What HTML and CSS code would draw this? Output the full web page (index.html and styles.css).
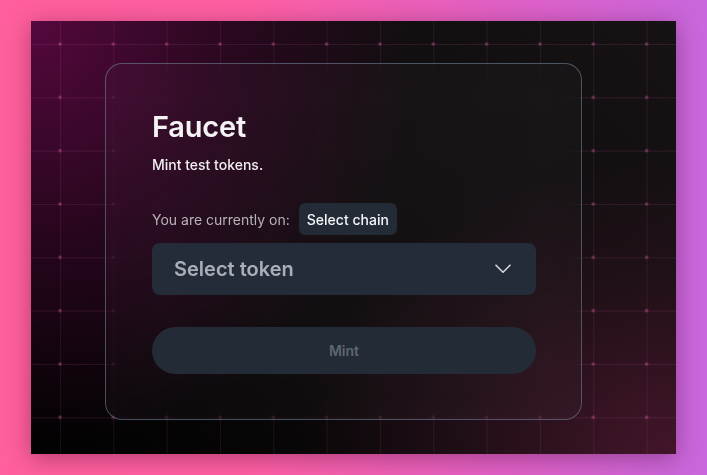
FILE: index.html
```html
<!DOCTYPE html>
<html lang="en">
<head>
<meta charset="utf-8">
<title>Faucet</title>
<link rel="stylesheet" href="styles.css">
</head>
<body>
<div class="stage">
  <div class="panel">
    <div class="card">
      <h1 class="title">Faucet</h1>
      <p class="subtitle">Mint test tokens.</p>
      <div class="chain-row">
        <span class="chain-label">You are currently on:</span>
        <button class="chip">Select chain</button>
      </div>
      <div class="token-select">
        <span class="token-text">Select token</span>
        <svg class="chevron" width="16" height="10" viewBox="0 0 16 10" fill="none">
          <path d="M1 1.2 L8 8.2 L15 1.2" stroke="#d3d7dd" stroke-width="1.6" stroke-linecap="round" stroke-linejoin="round"/>
        </svg>
      </div>
      <button class="mint">Mint</button>
    </div>
  </div>
</div>
</body>
</html>
```
FILE: styles.css
```css
html, body {
  margin: 0;
  padding: 0;
}
body {
  width: 707px;
  height: 475px;
  overflow: hidden;
  font-family: Inter, "Noto Sans", sans-serif;
  background: linear-gradient(90deg, #ff5f9c 0%, #ff5fa2 35%, #e060c6 72%, #c867dd 100%);
}
.stage {
  padding: 21px 31px;
}
.panel {
  width: 645px;
  height: 433px;
  box-sizing: border-box;
  padding: 42px 94px 33px 74px;
  box-shadow: 0 4px 22px rgba(40, 0, 30, 0.35);
  background:
    radial-gradient(circle, rgba(255, 110, 200, 0.45) 0, rgba(255, 110, 200, 0.25) 1.3px, transparent 2.3px) 2.33px -3.67px / 53.333px 53.333px,
    linear-gradient(90deg, rgba(255, 120, 200, 0.09) 0, rgba(255, 120, 200, 0.09) 1px, transparent 1px) 29px 0 / 53.333px 53.333px,
    linear-gradient(180deg, rgba(255, 120, 200, 0.11) 0, rgba(255, 120, 200, 0.11) 1px, transparent 1px) 0 23px / 53.333px 53.333px,
    radial-gradient(ellipse 70% 115% at 0% 0%, rgba(88, 8, 64, 0.95) 0%, rgba(58, 6, 42, 0.6) 45%, transparent 85%),
    radial-gradient(ellipse 70% 80% at 100% 100%, rgba(70, 22, 44, 0.95) 0%, rgba(48, 18, 32, 0.5) 50%, transparent 85%),
    linear-gradient(225deg, #171315 0%, #0c0a0b 55%, #020102 100%);
}
.card {
  width: 477px;
  height: 357px;
  box-sizing: border-box;
  border: 1px solid rgba(110, 128, 150, 0.6);
  border-radius: 17px;
  padding: 45px 45px 0 46px;
  background: rgba(255, 255, 255, 0.025);
  backdrop-filter: blur(14px);
  display: flex;
  flex-direction: column;
}
.title {
  margin: 0;
  font-size: 29px;
  line-height: 36px;
  font-weight: 600;
  color: #f4f2f4;
  letter-spacing: -0.2px;
}
.subtitle {
  margin: 10px 0 0;
  font-size: 14px;
  line-height: 20px;
  font-weight: 500;
  color: #f2eff2;
}
.chain-row {
  margin-top: 28px;
  display: flex;
  align-items: center;
  gap: 9px;
}
.chain-label {
  font-size: 14px;
  color: #b7b3ba;
}
.chip {
  height: 32px;
  padding: 0 8px;
  border: none;
  border-radius: 6px;
  background: #232b37;
  color: #f4f5f7;
  font-family: inherit;
  font-size: 14px;
  font-weight: 500;
}
.token-select {
  margin-top: 8px;
  height: 52px;
  border-radius: 8px;
  background: #242c39;
  display: flex;
  align-items: center;
  justify-content: space-between;
  padding: 0 25px 0 22px;
}
.token-text {
  font-size: 20px;
  font-weight: 600;
  color: #a9afb9;
}
.chevron {
  display: block;
}
.mint {
  margin-top: 32px;
  height: 47px;
  border: none;
  border-radius: 24px;
  background: #232b37;
  color: #5e6672;
  font-family: inherit;
  font-size: 14px;
  font-weight: 600;
}
```
